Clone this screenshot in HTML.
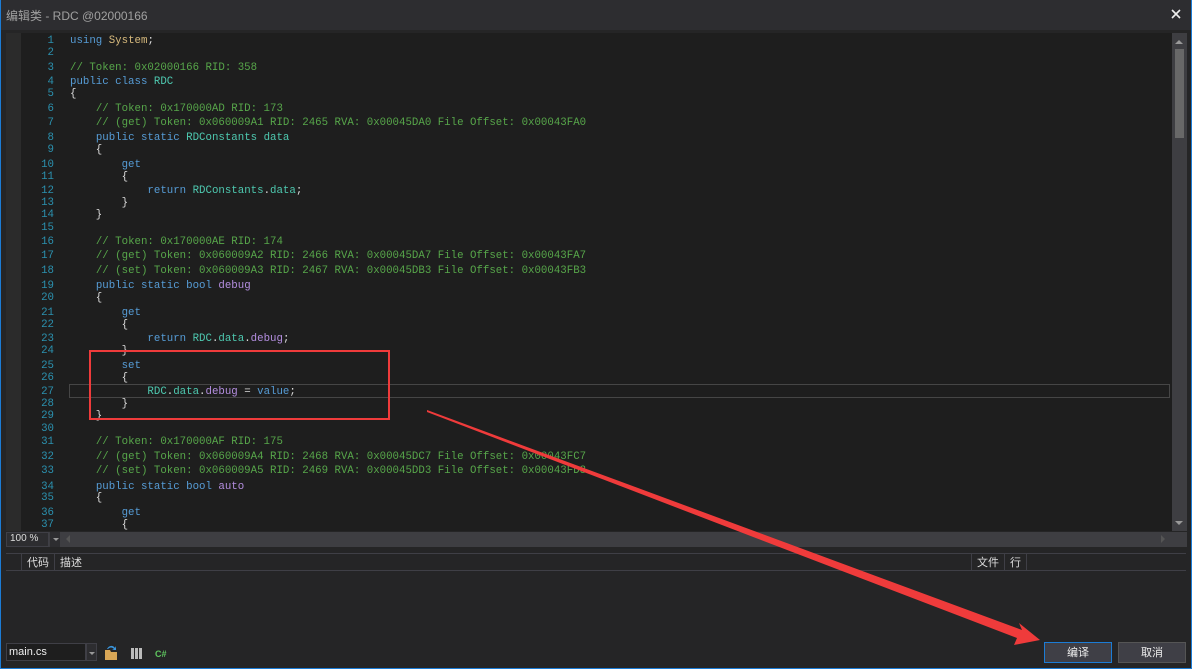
<!DOCTYPE html>
<html><head><meta charset="utf-8"><style>
*{margin:0;padding:0;box-sizing:border-box}
body{width:1192px;height:669px;background:#252526;position:relative;overflow:hidden;font-family:"Liberation Sans","Noto Sans CJK SC",sans-serif;color:#dcdcdc}
.frame{position:absolute;left:0;top:0;width:1192px;height:669px;border:1px solid #1c7cd5;border-top:none;pointer-events:none;z-index:9}
.title{position:absolute;left:0;top:0;width:1192px;height:30px;background:#2d2d30;font-size:12px;color:#a0a0a0;padding:7px 0 0 6px}
.ed{position:absolute;left:6px;top:33px;width:1181px;height:498px;background:#1e1e1e}
.gut{position:absolute;left:6px;top:33px;width:15px;height:498px;background:#2b2b2b}
.ln{position:absolute;left:22px;width:32px;text-align:right;font:10.75px "Liberation Mono",monospace;color:#2b91af}
.cl{position:absolute;left:70px;white-space:pre;font:10.75px "Liberation Mono",monospace;color:#dcdcdc}
.k{color:#569cd6}.t{color:#4ec9b0}.c{color:#57a64a}.p{color:#b48ee0}.y{color:#d7ba7d}
.vs{position:absolute;left:1172px;top:33px;width:15px;height:498px;background:#3e3e42}
.thumb{position:absolute;left:1175px;top:49px;width:9px;height:89px;background:#686868}
.zb{position:absolute;left:6px;top:532px;width:1181px;height:15px;background:#3e3e42}
.zoom{position:absolute;left:6px;top:532px;width:43px;height:15px;background:#2d2d30;border:1px solid #3f3f46;font-size:10px;padding-left:3px;color:#ddd}
.zdd{position:absolute;left:50px;top:532px;width:10px;height:15px;background:#2d2d30}
.hdr{position:absolute;left:6px;top:553px;width:1180px;height:18px;border-top:1px solid #3f3f46;border-bottom:1px solid #3f3f46;font-size:11px;color:#ddd}
.hdr span{position:absolute;top:0px}
.hdr i{position:absolute;top:0;width:1px;height:16px;background:#3f3f46}
.combo{position:absolute;left:6px;top:643px;width:80px;height:18px;background:#1e1e1e;border:1px solid #3f3f46;font-size:11px;padding:2px 0 0 2px;color:#eee}
.cdd{position:absolute;left:86px;top:643px;width:11px;height:18px;background:#2d2d30;border:1px solid #3f3f46}
.btn{position:absolute;top:642px;width:68px;height:21px;background:#3f3f46;border:1px solid #555;font-size:11px;text-align:center;line-height:20px;color:#eee}
</style></head><body>
<div class="title">编辑类 - RDC @02000166</div>
<svg style="position:absolute;left:1171px;top:9px" width="10" height="10"><path d="M1 1L9 9M9 1L1 9" stroke="#eee" stroke-width="1.6"/></svg>
<div class="ed"></div><div class="gut"></div>
<div style="position:absolute;left:69px;top:384px;width:1101px;height:14px;border:1px solid #464646"></div>
<div id="code"></div>
<div class="vs"></div><div class="thumb"></div>
<div style="position:absolute;left:1175px;top:40px;width:0;height:0;border:4px solid transparent;border-bottom:4px solid #999;border-top:none"></div>
<div style="position:absolute;left:1175px;top:521px;width:0;height:0;border:4px solid transparent;border-top:4px solid #999;border-bottom:none"></div>
<div class="zb"></div><div class="zoom">100 %</div><div class="zdd"></div>
<div style="position:absolute;left:53px;top:538px;border:3px solid transparent;border-top:3px solid #999;border-bottom:none"></div>
<div style="position:absolute;left:66px;top:535px;border:4px solid transparent;border-right:4px solid #555;border-left:none"></div>
<div style="position:absolute;left:1161px;top:535px;border:4px solid transparent;border-left:4px solid #555;border-right:none"></div>
<div class="hdr"><i style="left:15px"></i><span style="left:21px">代码</span><i style="left:48px"></i><span style="left:54px">描述</span><i style="left:965px"></i><span style="left:971px">文件</span><i style="left:998px"></i><span style="left:1004px">行</span><i style="left:1020px"></i></div>
<div class="combo">main.cs</div><div class="cdd"></div>
<div style="position:absolute;left:89px;top:652px;border:3px solid transparent;border-top:3px solid #999;border-bottom:none"></div>
<svg style="position:absolute;left:104px;top:645px" width="70" height="16">
<path d="M1 5h5l1 2h6v8H1z" fill="#d8a656"/><path d="M3 4c2-4 6-4 8-1l1-2v4H8l2-1c-2-2-4-2-6 0z" fill="#3a96dd"/>
<rect x="27" y="3" width="3" height="11" fill="#bbb"/><rect x="31" y="3" width="3" height="11" fill="#bbb"/><rect x="35" y="3" width="3" height="11" fill="#bbb"/>
<text x="51" y="12" font-size="9" font-weight="bold" fill="#5fc65f" font-family="Liberation Sans">C#</text></svg>
<div class="btn" style="left:1044px;border-color:#1c7cd5">编译</div>
<div class="btn" style="left:1118px">取消</div>
<div style="position:absolute;left:89px;top:350px;width:301px;height:70px;border:2px solid #ef3b3b"></div>
<svg style="position:absolute;left:0;top:0" width="1192" height="669"><polygon points="427,410 1022,630 1019,623 1040,640 1014,645 1017,638 427,412" fill="#ef3b3b"/></svg>
<div class="frame"></div>
<script>
var L=[
[40,'<span class="k">using</span> <span class="y">System</span>;'],[52,''],
[67,'<span class="c">// Token: 0x02000166 RID: 358</span>'],
[81,'<span class="k">public class</span> <span class="t">RDC</span>'],[93,'{'],
[108,'    <span class="c">// Token: 0x170000AD RID: 173</span>'],
[122,'    <span class="c">// (get) Token: 0x060009A1 RID: 2465 RVA: 0x00045DA0 File Offset: 0x00043FA0</span>'],
[137,'    <span class="k">public static</span> <span class="t">RDConstants</span> <span class="t">data</span>'],
[149,'    {'],[164,'        <span class="k">get</span>'],[176,'        {'],
[190,'            <span class="k">return</span> <span class="t">RDConstants</span>.<span class="t">data</span>;'],
[202,'        }'],[214,'    }'],[227,''],
[241,'    <span class="c">// Token: 0x170000AE RID: 174</span>'],
[255,'    <span class="c">// (get) Token: 0x060009A2 RID: 2466 RVA: 0x00045DA7 File Offset: 0x00043FA7</span>'],
[270,'    <span class="c">// (set) Token: 0x060009A3 RID: 2467 RVA: 0x00045DB3 File Offset: 0x00043FB3</span>'],
[285,'    <span class="k">public static bool</span> <span class="p">debug</span>'],
[297,'    {'],[312,'        <span class="k">get</span>'],[324,'        {'],
[338,'            <span class="k">return</span> <span class="t">RDC</span>.<span class="t">data</span>.<span class="p">debug</span>;'],
[350,'        }'],[365,'        <span class="k">set</span>'],[377,'        {'],
[391,'            <span class="t">RDC</span>.<span class="t">data</span>.<span class="p">debug</span> = <span class="k">value</span>;'],
[403,'        }'],[415,'    }'],[428,''],
[441,'    <span class="c">// Token: 0x170000AF RID: 175</span>'],
[456,'    <span class="c">// (get) Token: 0x060009A4 RID: 2468 RVA: 0x00045DC7 File Offset: 0x00043FC7</span>'],
[470,'    <span class="c">// (set) Token: 0x060009A5 RID: 2469 RVA: 0x00045DD3 File Offset: 0x00043FD3</span>'],
[486,'    <span class="k">public static bool</span> <span class="p">auto</span>'],
[497,'    {'],[512,'        <span class="k">get</span>'],[524,'        {']];
var h='';L.forEach(function(l,i){var t=l[0]-5;h+='<div class="ln" style="top:'+t+'px">'+(i+1)+'</div><div class="cl" style="top:'+t+'px">'+l[1]+'</div>';});
document.getElementById('code').innerHTML=h;
</script>
</body></html>
